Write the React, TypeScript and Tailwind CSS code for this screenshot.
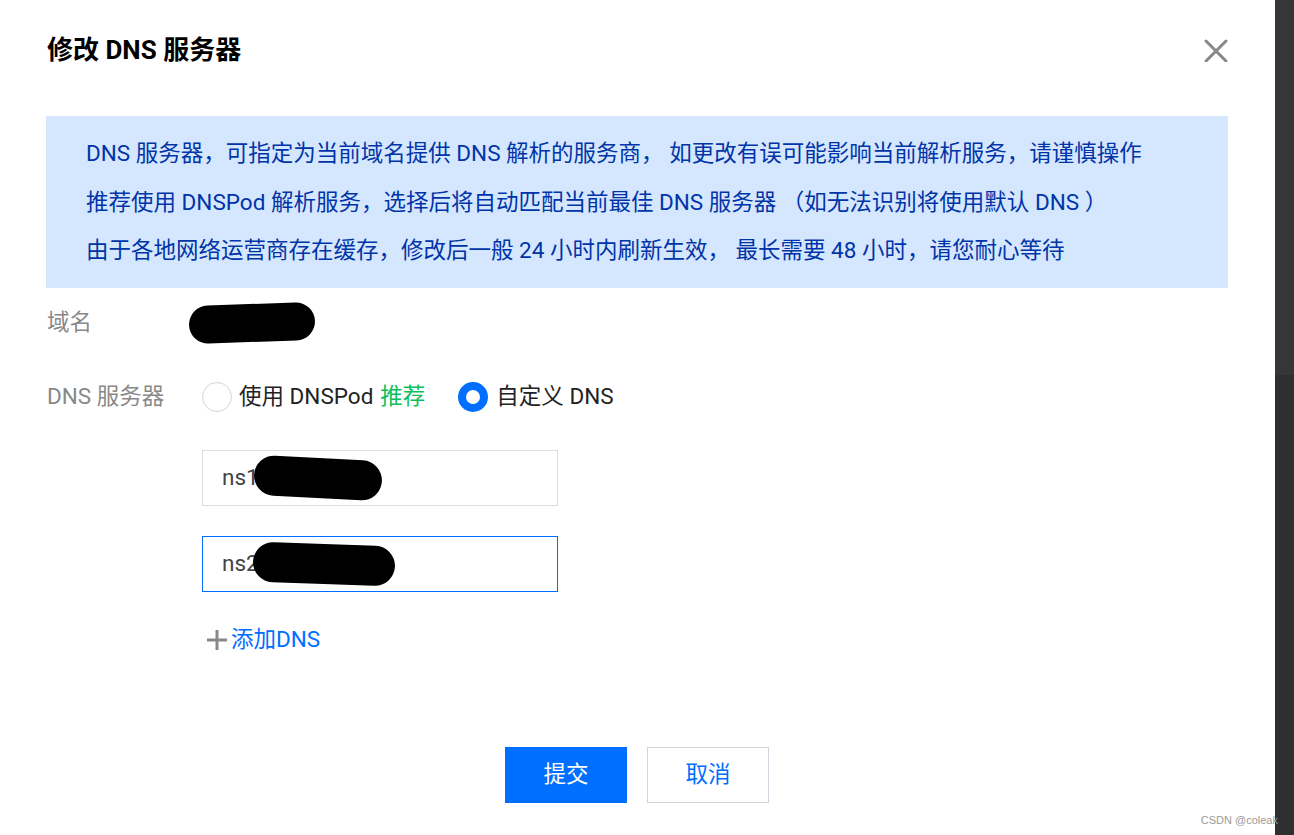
import React from "react";

const font = "font-['Roboto','Noto_Sans_CJK_SC',sans-serif]";

function Blob({ className }: { className: string }) {
  return <span className={"inline-block rounded-full bg-black " + className} />;
}

export default function App() {
  return (
    <div className={"flex h-[835px] w-[1294px] overflow-hidden bg-white " + font}>
      <div className="relative flex flex-1 flex-col pl-[46px] pr-[47px] pt-[34px]">
        {/* header */}
        <div className="flex h-[32px] items-center justify-between">
          <h2 className="pl-[1px] text-[26px] font-bold leading-[32px] text-black">
            修改 DNS 服务器
          </h2>
          <button className="flex h-[24px] w-[24px] items-center justify-center">
            <svg width="24" height="24" viewBox="0 0 24 24">
              <path d="M2 3 L22 23 M22 3 L2 23" stroke="#888888" strokeWidth="3" strokeLinecap="round" />
            </svg>
          </button>
        </div>

        {/* notice */}
        <div className="mt-[50px] bg-[#d5e7fe] py-[13px] pl-[40px] text-[22.5px] leading-[48.5px] text-[#0034a8]">
          <p>DNS 服务器，可指定为当前域名提供 DNS 解析的服务商， 如更改有误可能影响当前解析服务，请谨慎操作</p>
          <p>推荐使用 DNSPod 解析服务，选择后将自动匹配当前最佳 DNS 服务器 （如无法识别将使用默认 DNS ）</p>
          <p>由于各地网络运营商存在缓存，修改后一般 24 小时内刷新生效， 最长需要 48 小时，请您耐心等待</p>
        </div>

        {/* domain */}
        <div className="mt-[16px] flex h-[38px] items-center text-[22.5px]">
          <span className="w-[143px] pl-[1px] text-[#888888]">域名</span>
          <Blob className="h-[38px] w-[126px] -rotate-2" />
        </div>

        {/* dns server */}
        <div className="mt-[35px] flex h-[40px] items-center text-[22.5px]">
          <span className="w-[156px] pl-[1px] text-[#888888]">DNS 服务器</span>
          <label className="flex items-center">
            <span className="h-[30px] w-[30px] rounded-full border border-[#d0d4dc] bg-white" />
            <span className="ml-[7px] text-[#222222]">使用 DNSPod</span>
            <span className="ml-[7px] text-[#0abf5b]">推荐</span>
          </label>
          <label className="ml-[33px] flex items-center">
            <span className="h-[30px] w-[30px] rounded-full border-[8px] border-[#006eff] bg-white" />
            <span className="ml-[8px] text-[#222222]">自定义 DNS</span>
          </label>
        </div>

        {/* inputs */}
        <div className="ml-[156px] flex flex-col text-[22.5px]">
          <div className="mt-[33px] flex h-[56px] w-[356px] items-center border border-[#dddddd] pl-[19px] text-[#444444]">
            <span>ns1</span>
            <Blob className="-ml-[5px] h-[40px] w-[128px] rotate-3" />
          </div>
          <div className="mt-[30px] flex h-[56px] w-[356px] items-center border border-[#006eff] pl-[19px] text-[#444444]">
            <span>ns2</span>
            <Blob className="-ml-[6px] h-[40px] w-[142px] rotate-2" />
          </div>
          <button className="mt-[28px] flex h-[40px] items-center self-start pl-[4px] text-[#006eff]">
            <svg width="22" height="22" viewBox="0 0 22 22">
              <path d="M11 1 V21 M1 11 H21" stroke="#888888" strokeWidth="3" />
            </svg>
            <span className="ml-[3px]">添加DNS</span>
          </button>
        </div>

        {/* footer */}
        <div className="mt-[87px] flex justify-center gap-[20px] text-[22.5px]">
          <button className="h-[56px] w-[122px] bg-[#006eff] text-white">提交</button>
          <button className="h-[56px] w-[122px] border border-[#cfd5de] bg-white text-[#006eff]">取消</button>
        </div>

        <span className="absolute bottom-[7px] right-[-3px] text-[11px] text-[#9a9a9a] font-['Liberation_Sans',sans-serif]">
          CSDN @coleak
        </span>
      </div>

      <div className="flex w-[19px] flex-col">
        <div className="h-[375px] bg-[#363636]" />
        <div className="flex-1 bg-[#2f2f2f]" />
      </div>
    </div>
  );
}
